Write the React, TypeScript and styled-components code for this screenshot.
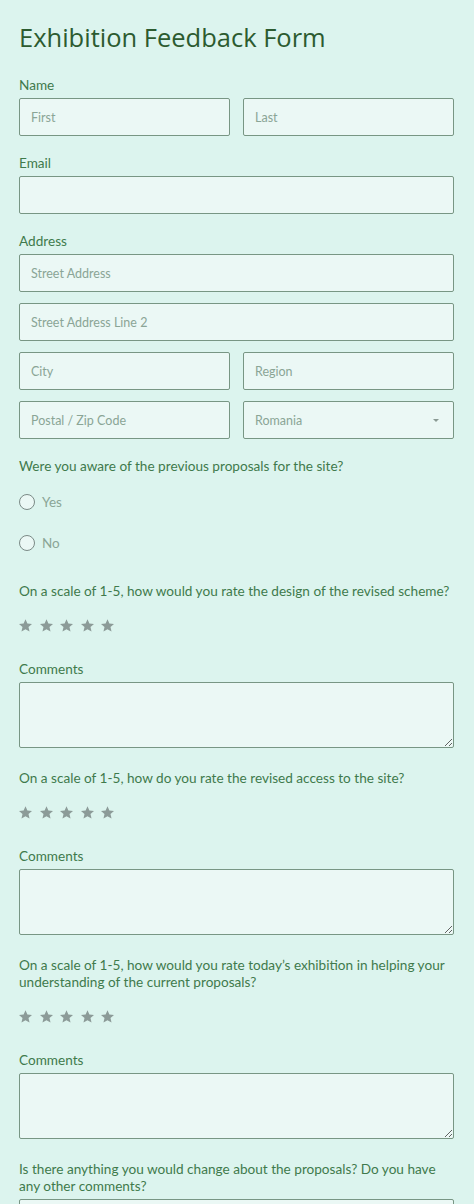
import { createGlobalStyle } from 'styled-components';
import styled from 'styled-components';

const GlobalStyle = createGlobalStyle`
    html, body {
        margin: 0;
        padding: 0;
        background: #dcf4ee;
    }
`;

const labelFont = `Lato, 'Noto Sans', sans-serif`;

export default function App() {
    return (
        <>
            <GlobalStyle />
            <Page>
                <Title>Exhibition Feedback Form</Title>

                <Field>
                    <Label>Name</Label>
                    <Row>
                        <TextInput placeholder="First" />
                        <TextInput placeholder="Last" />
                    </Row>
                </Field>

                <Field>
                    <Label>Email</Label>
                    <TextInput />
                </Field>

                <Field>
                    <Label>Address</Label>
                    <Stack>
                        <TextInput placeholder="Street Address" />
                        <TextInput placeholder="Street Address Line 2" />
                        <Row>
                            <TextInput placeholder="City" />
                            <TextInput placeholder="Region" />
                        </Row>
                        <Row>
                            <TextInput placeholder="Postal / Zip Code" />
                            <SelectBox>
                                <span>Romania</span>
                                <Caret />
                            </SelectBox>
                        </Row>
                    </Stack>
                </Field>

                <Field $gap={20}>
                    <Label>Were you aware of the previous proposals for the site?</Label>
                    <RadioOption>
                        <RadioCircle />
                        <OptionText>Yes</OptionText>
                    </RadioOption>
                    <RadioOption>
                        <RadioCircle />
                        <OptionText>No</OptionText>
                    </RadioOption>
                </Field>

                <RatingField question="On a scale of 1-5, how would you rate the design of the revised scheme?" />
                <CommentsField />

                <RatingField question="On a scale of 1-5, how do you rate the revised access to the site?" />
                <CommentsField />

                <RatingField question="On a scale of 1-5, how would you rate today’s exhibition in helping your understanding of the current proposals?" />
                <CommentsField />

                <Field>
                    <Label>Is there anything you would change about the proposals? Do you have any other comments?</Label>
                    <TextArea />
                </Field>
            </Page>
        </>
    );
}

function RatingField({ question }: { question: string }) {
    return (
        <Field $gap={29}>
            <Label>{question}</Label>
            <Stars>
                {[0, 1, 2, 3, 4].map(i => (
                    <Star key={i} viewBox="2 2.2 20 19">
                        <path d="M12 2.2l2.9 6.6 7.1.6-5.4 4.7 1.6 7-6.2-3.7-6.2 3.7 1.6-7L2 9.4l7.1-.6z" />
                    </Star>
                ))}
            </Stars>
        </Field>
    );
}

function CommentsField() {
    return (
        <Field $gap={22}>
            <Label>Comments</Label>
            <TextArea />
        </Field>
    );
}

const Page = styled.div`
    padding: 19px 20px 40px 19px;
    background: #dcf4ee;
    min-height: 1204px;
    box-sizing: border-box;
    font-family: ${labelFont};
`;

const Title = styled.h1`
    margin: 0 0 22px;
    font-family: 'Open Sans', sans-serif;
    font-weight: 400;
    font-size: 25.5px;
    line-height: 36px;
    color: #2c5b30;
`;

const Field = styled.div<{ $gap?: number }>`
    display: flex;
    flex-direction: column;
    margin-bottom: ${p => p.$gap ?? 19}px;
`;

const Label = styled.label`
    font-size: 13.6px;
    line-height: 17px;
    color: #3f7a4c;
    margin-bottom: 4px;
`;

const Row = styled.div`
    display: grid;
    grid-template-columns: 1fr 1fr;
    gap: 13px;
`;

const Stack = styled.div`
    display: flex;
    flex-direction: column;
    gap: 11px;
`;

const TextInput = styled.input`
    box-sizing: border-box;
    width: 100%;
    height: 38px;
    margin: 0;
    padding: 0 11px;
    border: 1px solid #789684;
    border-radius: 2px;
    background: #ebf8f5;
    font-family: ${labelFont};
    font-size: 12.5px;
    color: #3f7a4c;
    outline: none;

    &::placeholder {
        color: #8aa596;
    }
`;

const SelectBox = styled.div`
    box-sizing: border-box;
    height: 38px;
    padding: 0 11px;
    border: 1px solid #789684;
    border-radius: 2px;
    background: #ebf8f5;
    display: flex;
    align-items: center;
    justify-content: space-between;
    font-size: 12.5px;
    color: #8aa596;
`;

const Caret = styled.span`
    width: 0;
    height: 0;
    margin-right: 3px;
    border-left: 3px solid transparent;
    border-right: 3px solid transparent;
    border-top: 3px solid #8a9a94;
`;

const RadioOption = styled.div`
    display: flex;
    align-items: center;
    height: 41px;
    gap: 7px;
    &:first-of-type {
        margin-top: 2px;
    }
`;

const RadioCircle = styled.span`
    box-sizing: border-box;
    width: 16px;
    height: 16px;
    border: 1.5px solid #7b8a86;
    border-radius: 50%;
    background: #ebf8f5;
`;

const OptionText = styled.span`
    font-size: 13.5px;
    color: #8aa596;
`;

const Stars = styled.div`
    display: flex;
    gap: 7.5px;
    margin-top: 15px;
`;

const Star = styled.svg`
    width: 13px;
    height: 13px;
    fill: #8c9b98;
`;

const TextArea = styled.textarea`
    display: block;
    box-sizing: border-box;
    width: 100%;
    height: 66px;
    margin: 0;
    padding: 8px 11px;
    border: 1px solid #789684;
    border-radius: 2px;
    background: #ebf8f5;
    font-family: ${labelFont};
    font-size: 13px;
    outline: none;
`;
